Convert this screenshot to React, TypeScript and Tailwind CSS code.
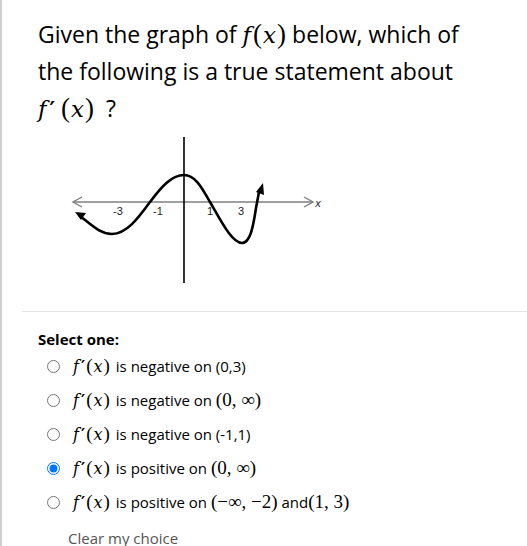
import React from "react";

const serif = { fontFamily: '"Liberation Serif", "DejaVu Serif", serif' };
const ital = { fontFamily: '"DejaVu Serif", "Liberation Serif", serif' };
const M = ({ children, className = "" }: { children: React.ReactNode; className?: string }) => (
  <span className={"italic " + className} style={ital}>{children}</span>
);
const R = ({ children, className = "" }: { children: React.ReactNode; className?: string }) => (
  <span className={className} style={serif}>{children}</span>
);
const P = ({ className = "" }: { className?: string }) => (
  <span className={"font-bold " + className} style={{ fontFamily: '"DejaVu Sans", sans-serif' }}>′</span>
);

const FPrime = () => (
  <span className="text-[19px] whitespace-nowrap">
    <M className="text-[16px]">f</M>
    <P className="text-[16px] ml-[2px] mr-[1px]" />
    <R>(</R>
    <M className="text-[16px] mx-[1px]">x</M>
    <R>)</R>
  </span>
);

function Graph() {
  return (
    <svg width="270" height="155" viewBox="60 130 270 155" className="block ml-[22px]">
      <line x1="73" y1="200" x2="313" y2="200" stroke="#7f7f7f" strokeWidth="1.6" />
      <polyline points="82,195 73,200 82,205" fill="none" stroke="#7f7f7f" strokeWidth="1.4" />
      <polyline points="304,195 313,200 304,205" fill="none" stroke="#7f7f7f" strokeWidth="1.4" />
      <line x1="184" y1="135" x2="184" y2="281" stroke="#000" strokeWidth="1.6" />
      <path
        d="M 80 214 C 95 226, 101 232, 112 232 C 127 232, 139 215, 150 200 C 162 184, 172 173, 184 173 C 196 173, 203 188, 210 200 C 221 219, 232 241, 242 241 C 250 241, 253 226, 256 206 L 259 190"
        fill="none"
        stroke="#000"
        strokeWidth="2.6"
        strokeLinecap="round"
      />
      <polygon points="75,210 86,211 81,218" fill="#000" />
      <polygon points="263,181 264,193 256,190" fill="#000" />
      <g fill="#1a1a2a" fontSize="11" fontFamily='"Liberation Sans", Arial, sans-serif' textAnchor="middle">
        <text x="118" y="213">-3</text>
        <text x="158" y="213">-1</text>
        <text x="210" y="213">1</text>
        <text x="241" y="213">3</text>
        <text x="318" y="205" fontStyle="italic">x</text>
      </g>
    </svg>
  );
}

const big = "text-[19px]";

const options: { text: React.ReactNode; checked?: boolean }[] = [
  { text: <>is negative on (0,3)</> },
  {
    text: (
      <>
        is negative on <R className={big}>(0, ∞)</R>
      </>
    ),
  },
  { text: <>is negative on (-1,1)</> },
  {
    text: (
      <>
        is positive on <R className={big}>(0, ∞)</R>
      </>
    ),
    checked: true,
  },
  {
    text: (
      <>
        is positive on <R className={big}>(−∞, −2)</R> and<R className={big}>(1, 3)</R>
      </>
    ),
  },
];

export default function App() {
  return (
    <div
      className="w-[527px] h-[546px] overflow-hidden bg-white border-l-2 border-[#cfcfcf] text-black"
      style={{ fontFamily: '"Open Sans", "Noto Sans", sans-serif' }}
    >
      <div className="pl-[36px] pt-[15px] pr-[10px]">
        <div className="text-[23px] leading-[36px]">
          <div className="whitespace-nowrap">
            Given the graph of{" "}
            <span className="text-[27px]">
              <M className="text-[23px] mr-[2px]">f</M>
              <R>(</R>
              <M className="text-[23px] mx-[1px]">x</M>
              <R>)</R>
            </span>{" "}
            below, which of
          </div>
          <div>the following is a true statement about</div>
          <div className="h-[36px]">
            <span className="text-[27px]">
              <M className="text-[23px]">f</M>
              <P className="text-[21px] ml-[3px]" />
              <R className="ml-[6px]">(</R>
              <M className="text-[23px] mx-[1px]">x</M>
              <R>)</R>
            </span>{" "}
            &nbsp;?
          </div>
        </div>
        <div className="mt-[7px]">
          <Graph />
        </div>
      </div>
      <div className="ml-[20px] mt-[24px] border-t border-[#e5e5e5]" />
      <div className="pl-[36px] pt-[15px]">
        <div className="text-[15px] font-bold leading-[24px]">Select one:</div>
        <div className="flex flex-col -mt-[2px]">
          {options.map((o, i) => (
            <div key={i} className="flex items-center h-[34px] text-[15px] whitespace-nowrap">
              <input type="radio" readOnly checked={!!o.checked} className="ml-[9px] mr-[13px] w-[13px] h-[13px]" />
              <FPrime />
              <span className="ml-[6px]">{o.text}</span>
            </div>
          ))}
        </div>
        <div className="ml-[30px] mt-[8px] text-[15px] text-[#555]">Clear my choice</div>
      </div>
    </div>
  );
}
